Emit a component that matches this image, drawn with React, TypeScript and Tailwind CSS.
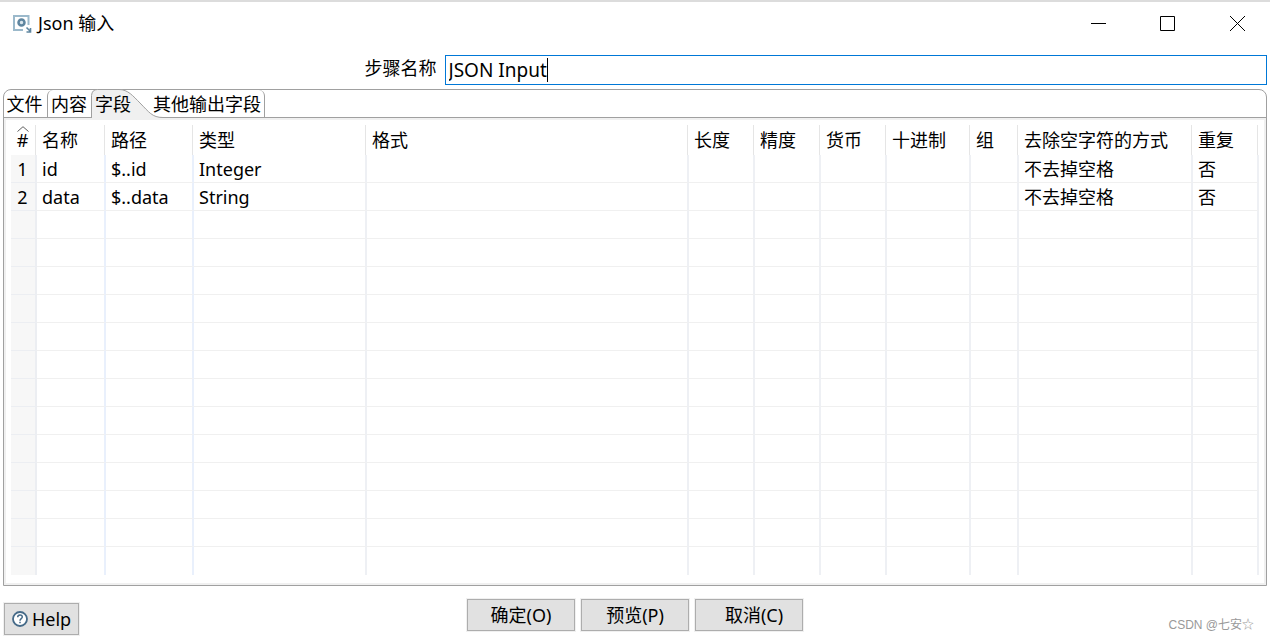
import { useState } from 'react';

const columns = [
    { label: '#', width: 'w-[26px]' },
    { label: '名称', width: 'w-[69px]' },
    { label: '路径', width: 'w-[88px]' },
    { label: '类型', width: 'w-[173px]' },
    { label: '格式', width: '' },
    { label: '长度', width: 'w-[66px]' },
    { label: '精度', width: 'w-[66px]' },
    { label: '货币', width: 'w-[66px]' },
    { label: '十进制', width: 'w-[84px]' },
    { label: '组', width: 'w-[48px]' },
    { label: '去除空字符的方式', width: 'w-[174px]' },
    { label: '重复', width: 'w-[66px]' },
];

const fields = [
    ['id', '$..id', 'Integer', '', '', '', '', '', '', '不去掉空格', '否'],
    ['data', '$..data', 'String', '', '', '', '', '', '', '不去掉空格', '否'],
];

const ROW_COUNT = 15;

function TitleBar() {
    return (
        <header className="flex h-12 items-center border-t-2 border-[#dcdcdc] pb-1 pl-3">
            <svg width="20" height="20" viewBox="0 0 20 20" className="mt-0.5" aria-hidden="true">
                <path d="M11 16H2V2h14.500V11" fill="none" stroke="#9bb9cb" strokeWidth="2" />
                <circle cx="9.500" cy="8.500" r="3" fill="#dbe6ed" stroke="#5f86a0" strokeWidth="2.500" />
                <path d="M14.500 13.500l3.500 3.500M18.500 14v4h-4" fill="none" stroke="#5f86a0" strokeWidth="1.600" />
            </svg>
            <h1 className="ml-1.5 text-[18px]">Json 输入</h1>
            <div className="ml-auto flex">
                <button type="button" aria-label="Minimize" className="flex h-10 w-[63px] items-center justify-center">
                    <svg width="15" height="15" viewBox="0 0 15 15" stroke="#000"><path d="M0 7.500h15" /></svg>
                </button>
                <button type="button" aria-label="Maximize" className="flex h-10 w-[75px] items-center justify-center">
                    <svg width="15" height="15" viewBox="0 0 15 15" fill="none" stroke="#000"><path d="M.5.5h14v14H.5z" /></svg>
                </button>
                <button type="button" aria-label="Close" className="flex h-10 w-[65px] items-center justify-center">
                    <svg width="15" height="15" viewBox="0 0 15 15" stroke="#000"><path d="M0 0l15 15M15 0L0 15" /></svg>
                </button>
            </div>
        </header>
    );
}

function Tabs() {
    return (
        <div role="tablist" className="flex h-7 border-b border-[#a0a0a0]">
            <button type="button" role="tab" aria-selected="false" className="w-[43px] pr-0.5">文件</button>
            <button type="button" role="tab" aria-selected="false" className="w-11 rounded-tl-md border-l border-[#a0a0a0] pr-px">内容</button>
            <button type="button" role="tab" aria-selected="true" className="relative w-[58px] pl-1 text-left">
                <svg width="74" height="29" viewBox="0 0 74 29" className="absolute -top-px left-0" aria-hidden="true">
                    <path d="M.5 29V6.500Q1 .5 6.500 .5H28C37 .5 42 7 49 14C58 23 61 28.500 72 28.500V29Z" fill="#f0f0f0" />
                    <path d="M.5 29V6.500Q1 .5 6.500 .5H28C37 .5 42 7 49 14C58 23 61 28.500 72 28.500" fill="none" stroke="#a0a0a0" />
                </svg>
                <span className="relative">字段</span>
            </button>
            <button type="button" role="tab" aria-selected="false" className="relative rounded-tr-md border-r border-[#a0a0a0] pr-[3px] pl-1">其他输出字段</button>
        </div>
    );
}

function FieldsTable() {
    return (
        <table className="w-full table-fixed border-separate border-spacing-0 text-left">
            <thead>
                <tr>
                    {columns.map((col, i) => (
                        <th
                            key={col.label}
                            scope="col"
                            className={`relative h-[30px] border-r border-white p-0 font-normal whitespace-nowrap shadow-[inset_-1px_0_0_#e5e5e5] ${col.width} ${i === 0 ? 'pr-0.5 text-center' : 'pl-[5px]'}`}
                        >
                            {i === 0 && (
                                <svg width="12" height="6" viewBox="0 0 12 6" fill="none" stroke="#606060" className="absolute top-px left-1.5" aria-hidden="true">
                                    <path d="M.5 5.500L6 .7l5.500 4.800" />
                                </svg>
                            )}
                            {col.label}
                        </th>
                    ))}
                </tr>
            </thead>
            <tbody>
                {Array.from({ length: ROW_COUNT }, (_, row) => (
                    <tr key={row}>
                        <td className={`h-7 border-r-2 border-[#eceef2] bg-[#f7f7f7] p-0 pr-px text-center ${row < ROW_COUNT - 1 ? 'border-b' : ''}`}>
                            {row < fields.length ? row + 1 : ''}
                        </td>
                        {columns.slice(1).map((col, i) => (
                            <td
                                key={col.label}
                                className={`h-7 border-r-2 border-b-[#f0f0f0] p-0 pl-[5px] whitespace-nowrap ${i < 2 ? 'border-r-[#e9f0fc]' : 'border-r-[#eef0f4]'} ${row < ROW_COUNT - 1 ? 'border-b' : ''}`}
                            >
                                {fields[row]?.[i]}
                            </td>
                        ))}
                    </tr>
                ))}
            </tbody>
        </table>
    );
}

const buttonClass = 'h-8 border border-[#adadad] bg-[#e1e1e1] outline outline-[#f0f0f0]';

export default function App() {
    const [stepName, setStepName] = useState('JSON Input');

    return (
        <main className="bg-white font-['Noto_Sans','Noto_Sans_CJK_SC',sans-serif] text-[18px] leading-6 text-black">
            <TitleBar />

            <div className="mt-[7px] flex items-center">
                <label htmlFor="step-name" className="w-[35%] pr-2 pb-1 text-right">步骤名称</label>
                <div className="relative mr-[3px] flex-1">
                    <input
                        id="step-name"
                        value={stepName}
                        onChange={(e) => setStepName(e.target.value)}
                        className="block h-[30px] w-full border border-[#0078d7] pl-[3px] text-[19px] outline-none"
                    />
                    {stepName === 'JSON Input' && <span className="absolute top-[3px] left-[102px] h-6 w-px bg-black" />}
                </div>
            </div>

            <section className="mx-[3px] mt-1 rounded-t-lg border border-[#a0a0a0]">
                <Tabs />
                <div className="border-2 border-[#f0f0f0] px-[5px] pt-[5px] pb-2">
                    <FieldsTable />
                </div>
            </section>

            <footer className="mt-[13px] grid grid-cols-[1fr_auto_1fr] items-start px-1">
                <button type="button" className={`${buttonClass} mt-1 flex w-[75px] items-center justify-center gap-1`}>
                    <svg width="16" height="16" viewBox="0 0 16 16" fill="none" stroke="#456a88" aria-hidden="true">
                        <circle cx="8" cy="8" r="7" fill="#fff" strokeWidth="1.800" />
                        <path d="M5.700 6.200C5.700 3.200 10.300 3.200 10.300 6C10.300 7.600 8 7.600 8 9.700M8 10.800v1.500" strokeWidth="1.500" />
                    </svg>
                    Help
                </button>
                <div className="flex gap-1.5">
                    <button type="button" className={`${buttonClass} w-[108px]`}>确定(O)</button>
                    <button type="button" className={`${buttonClass} w-[108px]`}>预览(P)</button>
                    <button type="button" className={`${buttonClass} w-[108px] pl-2.5`}>取消(C)</button>
                </div>
                <span className="mt-3.5 mr-3 justify-self-end font-['Liberation_Sans','Noto_Sans_CJK_SC',sans-serif] text-[12px] text-[#999]">CSDN @七安☆</span>
            </footer>
        </main>
    );
}
